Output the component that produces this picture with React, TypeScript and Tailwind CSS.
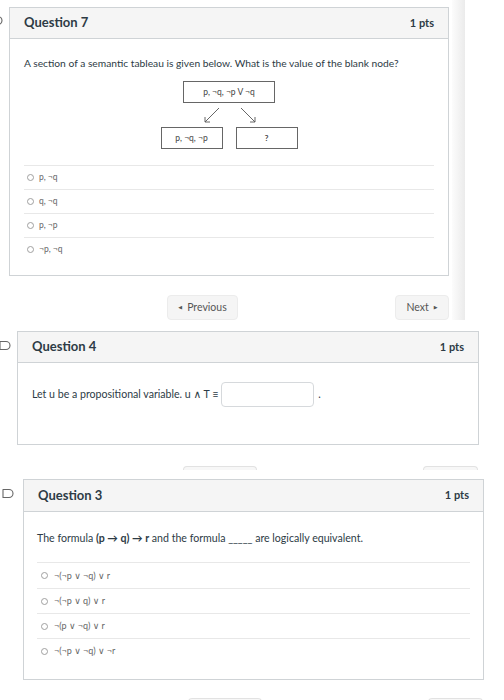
import type { ReactNode } from "react";

const font = { fontFamily: "Lato, 'DejaVu Sans', sans-serif" };

function Flag({ className }: { className: string }) {
  return (
    <svg viewBox="0 0 13 11" className={className} fill="none" stroke="#666" strokeWidth="1.1">
      <path d="M1 1.5 H7 A4 4 0 0 1 7 9.5 H1 Z" strokeLinejoin="round" />
    </svg>
  );
}

function Radio() {
  return <span className="w-[7px] h-[7px] rounded-full border border-[#a0a0a0] bg-white shrink-0" />;
}

function Panel({
  title,
  headerH,
  bodyH,
  children,
}: {
  title: string;
  headerH: string;
  bodyH: string;
  children: ReactNode;
}) {
  return (
    <div className="border border-[#cfd3d6] bg-white">
      <div className={`${headerH} flex items-center justify-between bg-[#f5f5f5] border-b border-[#cfd3d6] px-[14px]`}>
        <span className="text-[13px] font-bold text-[#2d3b45]">{title}</span>
        <span className="text-[11px] font-bold text-[#2d3b45]">1 pts</span>
      </div>
      <div className={bodyH}>{children}</div>
    </div>
  );
}

function Tableau() {
  return (
    <div className="flex flex-col items-center">
      <div className="w-[92px] h-[22px] border border-[#666] flex items-center justify-center text-[8.5px] text-[#444]">
        p, ¬q, ¬p V ¬q
      </div>
      <svg width="136" height="24" viewBox="0 0 136 24" fill="none" stroke="#555" strokeWidth="0.9">
        <path d="M58 5 L44 19" />
        <path d="M44 19 L44 14 M44 19 L49 19" />
        <path d="M80 5 L94 19" />
        <path d="M94 19 L94 14 M94 19 L89 19" />
      </svg>
      <div className="flex gap-[13px]">
        <div className="w-[62px] h-[22px] border border-[#666] flex items-center justify-center text-[8.5px] text-[#444]">
          p, ¬q, ¬p
        </div>
        <div className="w-[62px] h-[22px] border border-[#666] flex items-center justify-center text-[8px] font-bold text-[#444]">
          ?
        </div>
      </div>
    </div>
  );
}

const q7Options = ["p, ¬q", "q, ¬q", "p, ¬p", "¬p, ¬q"];
const q3Options = ["¬(¬p ∨ ¬q) ∨ r", "¬(¬p ∨ q) ∨ r", "¬(p ∨ ¬q) ∨ r", "¬(¬p ∨ ¬q) ∨ ¬r"];

export default function App() {
  return (
    <div className="w-[504px] h-[700px] overflow-hidden bg-white" style={font}>
      {/* Question 7 */}
      <div className="flex h-[322px]">
        <div className="w-[9px] shrink-0 overflow-hidden">
          <Flag className="w-[13px] h-[11px] -ml-[9px] mt-[15px]" />
        </div>
        <div className="w-[440px] shrink-0 pt-[7px]">
          <Panel title="Question 7" headerH="h-[31px]" bodyH="h-[236px] px-[14px]">
            <p className="pt-[18px] text-[10.25px] leading-[13px] text-[#2d3b45]">
              A section of a semantic tableau is given below. What is the value of the blank node?
            </p>
            <div className="mt-[11px]">
              <Tableau />
            </div>
            <div className="mt-[16px]">
              {q7Options.map((o) => (
                <div key={o} className="h-[24px] border-t border-[#e8e8e8] flex items-center gap-[5px] pl-[3px]">
                  <Radio />
                  <span className="text-[8.5px] text-[#666]">{o}</span>
                </div>
              ))}
            </div>
          </Panel>
          <div className="mt-[19px] flex">
            <div className="ml-[158px] w-[71px] h-[25px] bg-[#f5f5f5] border border-[#ececec] rounded-sm flex items-center justify-center gap-[5px] text-[10.5px] text-[#555]">
              <span className="text-[5px]">◀</span>
              Previous
            </div>
            <div className="ml-auto w-[54px] h-[25px] bg-[#f5f5f5] border border-[#ececec] rounded-sm flex items-center justify-center gap-[5px] text-[10.5px] text-[#555]">
              Next
              <span className="text-[5px]">▶</span>
            </div>
          </div>
        </div>
        <div className="ml-[3px] w-[13px] h-[320px] bg-linear-to-r from-[#fcfcfc] to-[#ebebeb]" />
      </div>

      {/* Question 4 */}
      <div className="flex pt-[9px]">
        <div className="w-[17px] shrink-0 overflow-hidden">
          <Flag className="w-[13px] h-[11px] -ml-[1px] mt-[9px]" />
        </div>
        <div className="w-[462px] shrink-0">
          <Panel title="Question 4" headerH="h-[31px]" bodyH="h-[81px] px-[14px] pt-[19px]">
            <div className="flex items-center text-[10.6px] text-[#2d3b45]">
              <span>Let u be a propositional variable. u ∧ T ≡</span>
              <span className="ml-[3px] w-[93px] h-[25px] border border-[#d6d9dc] rounded-sm bg-white" />
              <span className="ml-[4px]">.</span>
            </div>
          </Panel>
        </div>
      </div>
      <div className="h-[34px] pt-[21px] flex">
        <div className="ml-[183px] w-[74px] h-[4px] rounded-t-sm border-t border-x border-[#e2e2e2] bg-[#f7f7f7]" />
        <div className="ml-[166px] w-[55px] h-[4px] rounded-t-sm border-t border-x border-[#e2e2e2] bg-[#f7f7f7]" />
      </div>

      {/* Question 3 */}
      <div className="flex">
        <div className="w-[23px] shrink-0">
          <Flag className="w-[13px] h-[11px] ml-[2px] mt-[9px]" />
        </div>
        <div className="w-[461px] shrink-0">
          <Panel title="Question 3" headerH="h-[32px]" bodyH="h-[167px] px-[13px]">
            <p className="pt-[20px] text-[10.6px] leading-[13px] text-[#2d3b45]">
              The formula <b>(p → q) → r</b> and the formula _____ are logically equivalent.
            </p>
            <div className="mt-[17px]">
              {q3Options.map((o, i) => (
                <div
                  key={o}
                  className={`${i === 0 ? "h-[26px]" : "h-[25px]"} border-t border-[#e8e8e8] flex items-center gap-[6px] pl-[4px]`}
                >
                  <Radio />
                  <span className="text-[9px] text-[#666]">{o}</span>
                </div>
              ))}
            </div>
          </Panel>
        </div>
      </div>
      <div className="pt-[18px] flex">
        <div className="ml-[188px] w-[74px] h-[4px] rounded-t-sm border-t border-x border-[#e2e2e2] bg-[#f7f7f7]" />
        <div className="ml-[166px] w-[55px] h-[4px] rounded-t-sm border-t border-x border-[#e2e2e2] bg-[#f7f7f7]" />
      </div>
    </div>
  );
}
